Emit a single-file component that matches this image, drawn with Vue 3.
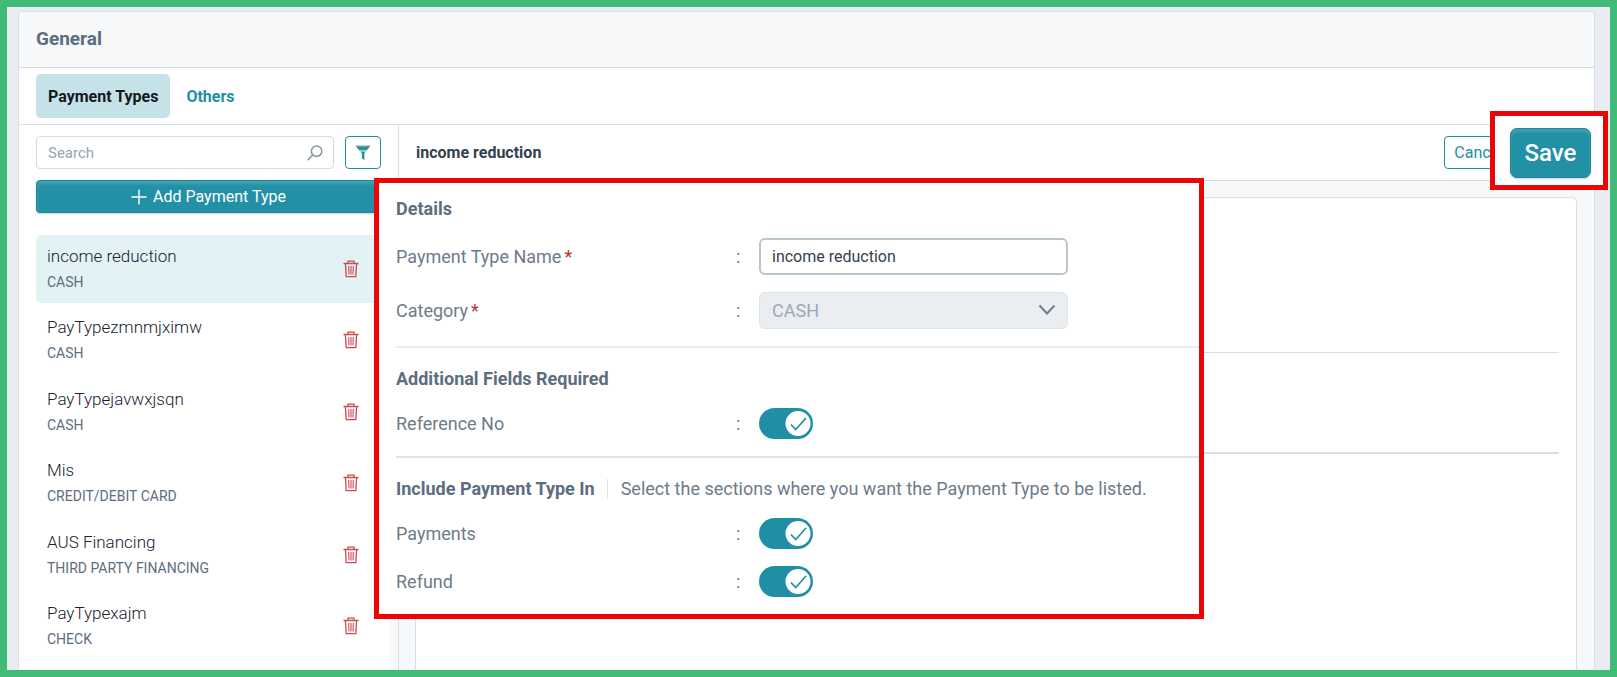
<script setup>
import { ref } from 'vue'

const search = ref('')
const name = ref('income reduction')
const category = ref('CASH')
const selected = ref(0)
const fields = ref({ reference: true, payments: true, refund: true })

const types = [
  { name: 'income reduction', category: 'CASH' },
  { name: 'PayTypezmnmjximw', category: 'CASH' },
  { name: 'PayTypejavwxjsqn', category: 'CASH' },
  { name: 'Mis', category: 'CREDIT/DEBIT CARD' },
  { name: 'AUS Financing', category: 'THIRD PARTY FINANCING' },
  { name: 'PayTypexajm', category: 'CHECK' },
]
</script>

<template>
  <div class="frame">
    <div class="panel">
      <header class="panel-head"><h1>General</h1></header>

      <nav class="tabs">
        <button type="button" class="tab active">Payment Types</button>
        <button type="button" class="tab">Others</button>
      </nav>

      <div class="body">
        <aside class="sidebar">
          <div class="tools">
            <div class="search-row">
              <div class="search">
                <input v-model="search" type="text" placeholder="Search" aria-label="Search payment types" />
                <svg width="16" height="16" viewBox="0 0 16 16" fill="none" stroke="#8a99a8" stroke-width="1.6">
                  <circle cx="9.6" cy="6.2" r="5.2" />
                  <path d="M5.8 10L1.2 14.6" stroke-linecap="round" />
                </svg>
              </div>
              <button type="button" class="filter" aria-label="Filter">
                <svg width="16" height="16" viewBox="0 0 16 16">
                  <path d="M1 0.5h14v1.6H1z" fill="#6f9dab" />
                  <path d="M1.4 2.1h13.2L11.6 5.5H4.4z" fill="#2191a5" />
                  <path d="M5 6.4h6L9.4 8v7L6.9 13.6V8z" fill="#2191a5" />
                </svg>
              </button>
            </div>
            <button type="button" class="add">
              <svg width="16" height="16" viewBox="0 0 16 16" stroke="#fff" stroke-width="1.4">
                <path d="M8 0.5v15M0.5 8h15" />
              </svg>
              Add Payment Type
            </button>
          </div>

          <ul class="list">
            <li v-for="(t, i) in types" :key="t.name" :class="['item', { chosen: i === selected }]" @click="selected = i">
              <div>
                <div class="item-name">{{ t.name }}</div>
                <div class="item-kind">{{ t.category }}</div>
              </div>
              <button type="button" class="trash" :aria-label="'Delete ' + t.name">
                <svg width="16" height="18" viewBox="0 0 16 18" fill="none" stroke="#cf4a52" stroke-width="1.3">
                  <path d="M0.5 3.5h15M5 3.3V1.2h6v2.1M2.4 3.6l0.8 13h9.6l0.8-13" />
                  <path d="M5.7 6l0.3 8.4M8 6v8.4M10.3 6L10 14.4" stroke-width="1.1" />
                </svg>
              </button>
            </li>
          </ul>
        </aside>

        <main class="main">
          <div class="main-head">
            <h2>{{ name }}</h2>
            <button type="button" class="cancel">Cancel</button>
          </div>
          <div class="main-body">
            <div class="sheet">
              <hr class="line thin" />
              <hr class="line" />
            </div>
          </div>
        </main>
      </div>
    </div>

    <section class="callout details">
      <div class="group">
        <h3>Details</h3>
        <div class="row">
          <label for="type-name">Payment Type Name<span class="star">*</span></label>
          <span class="colon">:</span>
          <input id="type-name" v-model="name" type="text" class="field" />
        </div>
        <div class="row">
          <label for="category">Category<span class="star">*</span></label>
          <span class="colon">:</span>
          <div class="select">
            <select id="category" v-model="category" class="field" disabled>
              <option>CASH</option>
            </select>
            <svg width="18" height="12" viewBox="0 0 18 12" fill="none" stroke="#71808f" stroke-width="2">
              <path d="M1.5 1.5L9 9.5l7.5-8" />
            </svg>
          </div>
        </div>
      </div>

      <div class="group">
        <h3>Additional Fields Required</h3>
        <div class="row">
          <label for="reference">Reference No</label>
          <span class="colon">:</span>
          <div class="toggle">
            <input id="reference" v-model="fields.reference" type="checkbox" />
            <svg width="17" height="14" viewBox="0 0 17 14" fill="none" stroke="#1f8fa3" stroke-width="1.7">
              <path d="M1 7.5l4.7 5L16 1" />
            </svg>
          </div>
        </div>
      </div>

      <div class="group strong">
        <div class="title-row">
          <h3>Include Payment Type In</h3>
          <p>Select the sections where you want the Payment Type to be listed.</p>
        </div>
        <div class="row">
          <label for="payments">Payments</label>
          <span class="colon">:</span>
          <div class="toggle">
            <input id="payments" v-model="fields.payments" type="checkbox" />
            <svg width="17" height="14" viewBox="0 0 17 14" fill="none" stroke="#1f8fa3" stroke-width="1.7">
              <path d="M1 7.5l4.7 5L16 1" />
            </svg>
          </div>
        </div>
        <div class="row">
          <label for="refund">Refund</label>
          <span class="colon">:</span>
          <div class="toggle">
            <input id="refund" v-model="fields.refund" type="checkbox" />
            <svg width="17" height="14" viewBox="0 0 17 14" fill="none" stroke="#1f8fa3" stroke-width="1.7">
              <path d="M1 7.5l4.7 5L16 1" />
            </svg>
          </div>
        </div>
      </div>
    </section>

    <div class="callout save-box">
      <button type="button" class="save">Save</button>
    </div>
  </div>
</template>

<style>
body {
  margin: 0;
}
</style>

<style scoped>
.frame,
.frame * {
  box-sizing: border-box;
}
.frame {
  position: relative;
  display: flex;
  min-height: 100vh;
  border: 7px solid #43bb78;
  padding: 4px 15px 0 11px;
  background: #e9edf1;
  font-family: Roboto, "Liberation Sans", sans-serif;
  font-size: 16px;
  color: #33414f;
}
h1,
h2,
h3,
p,
ul {
  margin: 0;
  padding: 0;
}
button,
input,
select {
  font: inherit;
  margin: 0;
}
svg {
  display: block;
  flex: none;
}
.panel {
  flex: 1;
  display: flex;
  flex-direction: column;
  border: 1px solid #d6dee6;
  border-bottom: 0;
  border-radius: 5px 5px 0 0;
  background: #fff;
  overflow: hidden;
}
.panel-head {
  padding: 15px 17px 16px;
  background: #f6f8fa;
  border-bottom: 1px solid #d6dee6;
}
h1 {
  font-size: 19px;
  line-height: 24px;
  font-weight: 700;
  color: #5d6d7e;
}
.tabs {
  display: flex;
  gap: 4px;
  padding: 6px 17px;
  border-bottom: 1px solid #d6dee6;
}
.tab {
  height: 44px;
  padding: 0 12px;
  border: 0;
  border-radius: 5px;
  background: none;
  font-weight: 700;
  color: #1f8fa3;
}
.tab.active {
  background: #c5e2e8;
  color: #14181c;
}
.body {
  flex: 1;
  display: flex;
}
.sidebar {
  flex: none;
  width: 380px;
  display: flex;
  flex-direction: column;
  border-right: 1px solid #d6dee6;
}
.tools {
  display: flex;
  flex-direction: column;
  gap: 11px;
  padding: 11px 17px 22px;
}
.search-row {
  display: flex;
  gap: 11px;
}
.search {
  flex: 1;
  display: flex;
  align-items: center;
  gap: 8px;
  height: 33px;
  padding: 0 10px;
  border: 1px solid #d3dbe4;
  border-radius: 4px;
}
.search input {
  flex: 1;
  min-width: 0;
  padding: 0 1px;
  border: 0;
  outline: 0;
  background: none;
  font-size: 15px;
  color: #33414f;
}
.search input::placeholder {
  color: #98a4b0;
}
.filter {
  display: flex;
  align-items: center;
  justify-content: center;
  width: 36px;
  padding: 0;
  border: 1px solid #1f8fa3;
  border-radius: 4px;
  background: #fff;
}
.add,
.save {
  border: 1px solid #1d8a9d;
  background: #2391a5;
  box-shadow: inset 0 3px 3px rgba(255, 255, 255, 0.14), 0 1px 2px rgba(0, 0, 0, 0.2);
  color: #fff;
}
.add {
  display: flex;
  align-items: center;
  justify-content: center;
  gap: 6px;
  height: 33px;
  border-radius: 4px;
  padding: 0;
}
.list {
  flex: 1;
  display: grid;
  grid-auto-rows: 1fr;
  gap: 4px;
  padding: 0 0 10px 17px;
  border-right: 8px solid #f6f8fa;
  list-style: none;
}
.item {
  display: flex;
  align-items: center;
  justify-content: space-between;
  padding: 0 31px 0 11px;
  border-radius: 5px;
}
.item.chosen {
  background: #e3f2f5;
}
.item-name {
  font-size: 17px;
  font-weight: 300;
  line-height: 24px;
  color: #16222e;
}
.item-kind {
  font-size: 14px;
  line-height: 24px;
  padding-top: 2px;
  color: #5d6d7e;
}
.trash {
  border: 0;
  padding: 0;
  background: none;
}
.main {
  flex: 1;
  display: flex;
  flex-direction: column;
  background: #f6f8fa;
}
.main-head {
  display: flex;
  align-items: center;
  justify-content: space-between;
  padding: 11px 81px 11px 17px;
  background: #fff;
  border-bottom: 1px solid #d6dee6;
}
h2 {
  font-size: 16px;
  font-weight: 700;
}
.cancel {
  height: 33px;
  padding: 0 9px;
  border: 1px solid #1f8fa3;
  border-radius: 4px;
  background: #fff;
  color: #1f8fa3;
}
.main-body {
  flex: 1;
  display: flex;
  padding: 16px 17px 0 16px;
}
.sheet {
  flex: 1;
  padding: 154px 17px 0;
  border: 1px solid #d6dee6;
  border-bottom: 0;
  border-radius: 5px 5px 0 0;
  background: #fff;
}
.line {
  height: 2px;
  margin: 0;
  border: 0;
  background: #d6dee8;
}
.line.thin {
  height: 1px;
  margin-bottom: 99px;
}
.callout {
  position: absolute;
  border: 5px solid #ea0606;
  background: #fff;
}
.details {
  top: 171px;
  left: 367px;
  right: 406px;
  padding-left: 17px;
  font-size: 18px;
  color: #6d7b8a;
}
.group {
  display: flex;
  flex-direction: column;
  gap: 17px;
  padding: 19px 0 17px;
  border-top: 2px solid #e9edf1;
}
.group:first-child {
  border-top: 0;
  padding-top: 14px;
}
.group.strong {
  border-color: #dde3ea;
}
h3 {
  font-size: 18px;
  line-height: 24px;
  font-weight: 700;
  color: #5d6d7e;
}
.title-row {
  display: flex;
  align-items: center;
}
.title-row p {
  margin-left: 12px;
  padding-left: 13px;
  border-left: 1px solid #dde3ea;
  line-height: 20px;
}
.row {
  display: grid;
  grid-template-columns: 340px 23px 309px;
  align-items: center;
}
.star {
  margin-left: 3px;
  color: #b5323c;
}
.field {
  display: block;
  width: 100%;
  height: 37px;
  padding: 0 11px;
  border: 2px solid #bac6ce;
  border-radius: 6px;
  background: #fff;
  color: #33414f;
  font-size: 16px;
}
.select {
  position: relative;
}
.select .field {
  appearance: none;
  padding: 0 12px;
  border: 1px solid #dfe4ea;
  background: #eaeef1;
  color: #9ca9b6;
  font-size: 18px;
  opacity: 1;
}
.select svg {
  position: absolute;
  right: 12px;
  top: 12px;
  pointer-events: none;
}
.toggle {
  position: relative;
  width: 54px;
  height: 31px;
}
.toggle input {
  appearance: none;
  display: block;
  width: 54px;
  height: 31px;
  border-radius: 16px;
  background: radial-gradient(circle at 39px 50%, #fff 12px, #1f8fa3 13px);
}
.toggle svg {
  position: absolute;
  left: 31px;
  top: 9px;
  pointer-events: none;
}
.save-box {
  top: 104px;
  right: 2px;
  padding: 12px 12px 7px 15px;
}
.save {
  display: block;
  width: 81px;
  height: 50px;
  padding: 0;
  border-radius: 7px;
  font-size: 24px;
  font-weight: 500;
}
</style>
